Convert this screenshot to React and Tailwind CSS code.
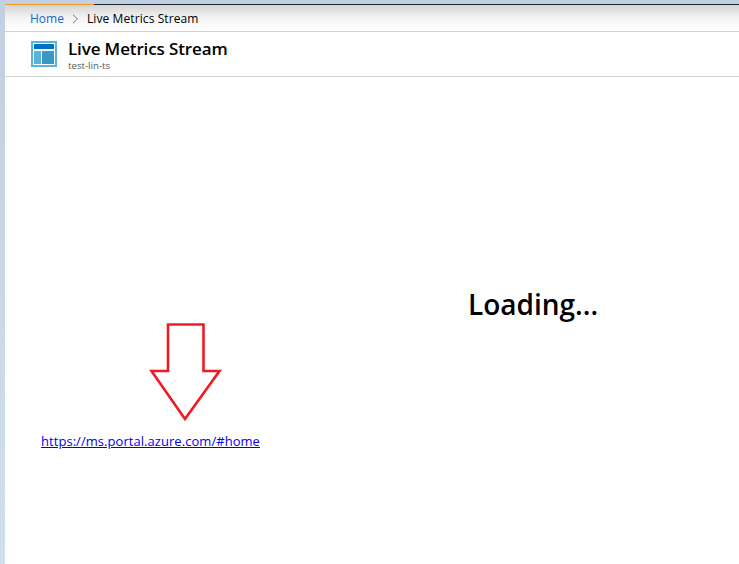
export default function App() {
  return (
    <div className="flex h-[564px] w-[739px] overflow-hidden bg-white font-['Open_Sans',sans-serif]">
      {/* portal side strip */}
      <div className="w-[5px] shrink-0 bg-gradient-to-b from-[#c3cfe2] to-[#d3deec]" />

      <div className="flex min-w-0 flex-1 flex-col">
        {/* top bar */}
        <div className="h-1 bg-[#c3cfe2]" />
        <div className="flex h-px">
          <div className="w-[89px] bg-[#f59a1c]" />
          <div className="flex-1 bg-[#1c2430]" />
        </div>

        {/* breadcrumb */}
        <div className="flex h-[26px] items-center bg-gradient-to-b from-[#d4d4d4] via-[#f4f4f4] to-white pl-[25px] pt-[2px] text-[12px]">
          <span className="text-[#1466d2]">Home</span>
          <svg className="mx-[8px]" width="7" height="10" viewBox="0 0 7 10" fill="none" stroke="#7a7a7a" strokeWidth="1">
            <path d="M1 .8 5.4 5 1 9.2" />
          </svg>
          <span className="tracking-[0.1px] text-black">Live Metrics Stream</span>
        </div>

        {/* title */}
        <div className="flex h-[46px] items-center gap-[11px] border-y border-[#d2d2d2] pl-[26px]">
          <svg width="26" height="26" viewBox="0 0 26 26">
            <rect width="26" height="26" fill="#59b4d9" />
            <rect x="2" y="2" width="22" height="22" fill="#ffffff" />
            <rect x="3" y="3" width="20" height="5" fill="#0072c6" />
            <rect x="3" y="10" width="7" height="13" fill="#59b4d9" />
            <rect x="11" y="10" width="12" height="13" fill="#3999c6" />
          </svg>
          <div className="flex flex-col pt-[2px]">
            <span className="text-[17px] font-semibold leading-[22px] tracking-[-0.13px] text-black">Live Metrics Stream</span>
            <span className="text-[9.7px] leading-[12px] text-[#555555]">test-lin-ts</span>
          </div>
        </div>

        {/* body */}
        <div className="relative flex flex-1 flex-col">
          <h1 className="ml-[463px] mt-[206px] text-[28px] font-semibold leading-[42px] text-black">Loading...</h1>

          <svg className="absolute left-[144px] top-[245px]" width="74" height="100" viewBox="0 0 74 100" fill="none" stroke="#ed1c24" strokeWidth="2.6">
            <path d="M19 2.5H54.5V49H70.5L36 97 2.5 49H19Z" />
          </svg>

          <a href="#home" className="ml-[36px] mt-[107px] w-fit text-[13px] leading-[18px] tracking-[0.05px] text-[#0000ee] underline">
            https://ms.portal.azure.com/#home
          </a>
        </div>
      </div>
    </div>
  );
}
